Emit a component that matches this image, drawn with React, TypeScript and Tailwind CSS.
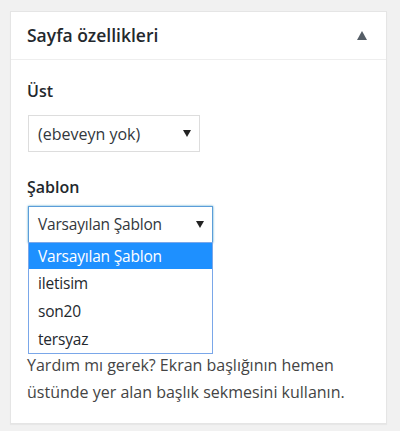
import React from "react";

const font = { fontFamily: '"Open Sans", "Noto Sans", sans-serif' };

function Arrow() {
  return (
    <svg width="8" height="7" viewBox="0 0 8 7" className="block">
      <path d="M0 0 H8 L4 7 Z" fill="#222" />
    </svg>
  );
}

export default function App() {
  return (
    <div className="w-[400px] h-[431px] bg-[#f1f1f1] pt-[11px] pl-[10px]" style={font}>
      <div className="w-[377px] h-[413px] bg-white border border-[#e5e5e5] shadow-[0_1px_1px_rgba(0,0,0,0.04)]">
        <div className="h-[48px] border-b border-[#eeeeee] flex items-center justify-between pl-[16px] pr-[19px]">
          <span className="text-[17.5px] text-[#23282d] font-semibold">Sayfa özellikleri</span>
          <svg width="10" height="9" viewBox="0 0 10 9">
            <path d="M5 0 L10 9 H0 Z" fill="#555d66" />
          </svg>
        </div>
        <div className="pl-[16px] pt-[21px] text-[#23282d]">
          <div className="text-[16px] font-semibold leading-[20px]">Üst</div>
          <div className="mt-[14px] ml-[1px] w-[172px] h-[37px] border border-[#dddddd] flex items-center justify-between pl-[9px] pr-[8px] text-[16px] text-[#32373c]">
            <span>(ebeveyn yok)</span>
            <Arrow />
          </div>
          <div className="mt-[25px] text-[16px] font-semibold leading-[20px]">Şablon</div>
          <div className="relative mt-[9px] ml-[1px] w-[185px]">
            <div className="h-[37px] border border-[#5b9dd9] shadow-[0_0_2px_rgba(30,140,190,0.8)] flex items-center justify-between pl-[9px] pr-[8px] text-[15.5px] tracking-[-0.2px] text-[#32373c]">
              <span>Varsayılan Şablon</span>
              <Arrow />
            </div>
            <div className="absolute left-0 top-[36px] w-[185px] border border-[#7aa7e9] bg-white text-[15.5px] tracking-[-0.2px] text-[#23282d] z-10">
              <div className="h-[26px] bg-[#1e90ff] text-white pl-[9px] leading-[26px]">Varsayılan Şablon</div>
              <div className="h-[28px] pl-[9px] leading-[28px]">iletisim</div>
              <div className="h-[28px] pl-[9px] leading-[28px]">son20</div>
              <div className="h-[28px] pl-[9px] leading-[28px]">tersyaz</div>
            </div>
          </div>
          <div className="mt-[109px] text-[16px] leading-[27px] text-[#444] pr-[6px]">
            Yardım mı gerek? Ekran başlığının hemen üstünde yer alan başlık sekmesini kullanın.
          </div>
        </div>
      </div>
    </div>
  );
}
